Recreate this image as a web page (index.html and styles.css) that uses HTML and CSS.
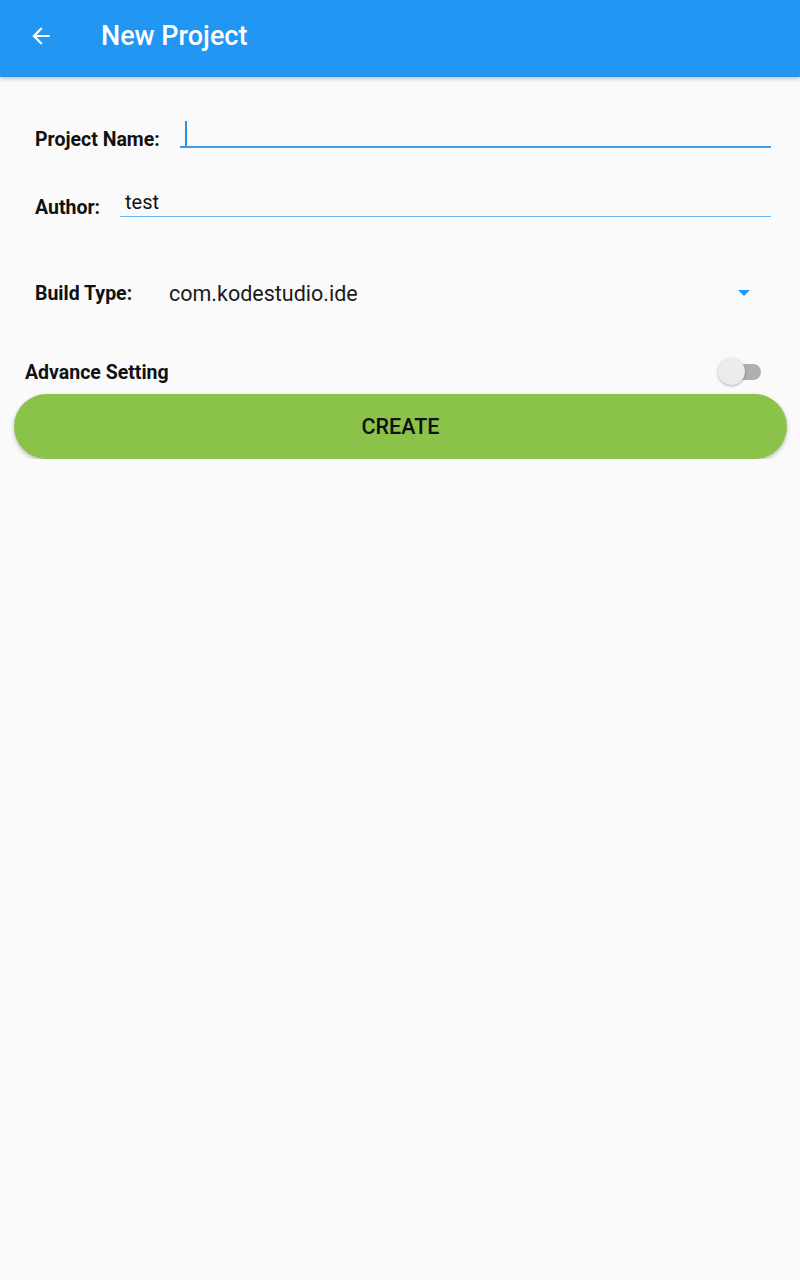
FILE: index.html
```html
<!DOCTYPE html>
<html>
<head>
<meta charset="utf-8">
<link rel="stylesheet" href="styles.css">
</head>
<body>
<header class="appbar">
  <svg class="back" viewBox="0 0 24 24" width="26" height="26"><path d="M20 11H7.83l5.59-5.59L12 4l-8 8 8 8 1.41-1.41L7.83 13H20v-2z" fill="#fff"/></svg>
  <h1 class="title">New Project</h1>
</header>
<main class="content">
  <div class="row row-name">
    <label class="label">Project Name:</label>
    <div class="input focused"><span class="cursor"></span></div>
  </div>
  <div class="row row-author">
    <label class="label">Author:</label>
    <div class="input"><span class="value">test</span></div>
  </div>
  <div class="row row-build">
    <label class="label">Build Type:</label>
    <div class="select">
      <span class="select-value">com.kodestudio.ide</span>
      <span class="caret"></span>
    </div>
  </div>
  <div class="row row-adv">
    <span class="label">Advance Setting</span>
    <span class="switch"><span class="track"></span><span class="thumb"></span></span>
  </div>
  <button class="create">CREATE</button>
</main>
</body>
</html>
```

FILE: styles.css
```css
html, body {
  margin: 0;
  padding: 0;
  background: #fafafa;
  font-family: Roboto, "Noto Sans", sans-serif;
  color: #212121;
}
.appbar {
  height: 77px;
  background: #2196f3;
  display: flex;
  align-items: center;
  padding-left: 28px;
  box-shadow: 0 2px 4px rgba(0,0,0,0.22);
  position: relative;
}
.back {
  margin-top: -6px;
}
.title {
  margin: -6px 0 0 47px;
  font-size: 27px;
  font-weight: 500;
  color: #fff;
}
.content {
  display: flex;
  flex-direction: column;
}
.row {
  display: flex;
  align-items: flex-end;
}
.label {
  font-size: 19.5px;
  font-weight: 700;
  color: #111;
  white-space: nowrap;
}
.row-name {
  margin-top: 31px;
  padding: 0 29px 0 35px;
  height: 40px;
}
.row-name .label {
  width: 145px;
  margin-bottom: -3px;
}
.input {
  flex: 1;
  position: relative;
  height: 38px;
  border-bottom: 1px solid #64b5f6;
  display: flex;
  align-items: flex-end;
}
.input.focused {
  border-bottom: 2px solid #3f9be8;
  height: 38px;
}
.cursor {
  position: absolute;
  left: 5px;
  bottom: 0;
  width: 2px;
  height: 25px;
  background: #2b8fe6;
}
.row-author {
  margin-top: 29px;
  padding: 0 29px 0 35px;
  height: 40px;
}
.row-author .label {
  width: 85px;
  margin-bottom: -2px;
}
.row-author .input {
  height: 39px;
}
.value {
  font-size: 20px;
  padding-left: 5px;
  padding-bottom: 2px;
  color: #111;
}
.row-build {
  margin-top: 56px;
  padding: 0 40px 0 35px;
  height: 40px;
  align-items: center;
}
.row-build .label {
  width: 134px;
}
.select {
  flex: 1;
  display: flex;
  align-items: center;
  justify-content: space-between;
}
.select-value {
  font-size: 21.5px;
  color: #1a1a1a;
}
.caret {
  width: 0;
  height: 0;
  border-left: 6px solid transparent;
  border-right: 6px solid transparent;
  border-top: 6px solid #2196f3;
  margin-right: 10px;
}
.row-adv {
  margin-top: 44px;
  padding: 0 39px 0 25px;
  height: 30px;
  align-items: center;
  justify-content: space-between;
}
.switch {
  position: relative;
  width: 43px;
  height: 28px;
  display: inline-block;
}
.track {
  position: absolute;
  left: 5px;
  right: 0;
  top: 6px;
  height: 16px;
  border-radius: 8px;
  background: #b0b0b0;
}
.thumb {
  position: absolute;
  left: 0;
  top: 0;
  width: 27px;
  height: 27px;
  border-radius: 50%;
  background: #ececec;
  box-shadow: 0 1px 3px rgba(0,0,0,0.3);
}
.create {
  margin: 7px 13px 0 14px;
  height: 65px;
  border: none;
  border-radius: 33px;
  background: #8bc34a;
  font-family: Roboto, sans-serif;
  font-size: 21.5px;
  font-weight: 500;
  color: #111;
  box-shadow: 0 2px 4px rgba(0,0,0,0.25);
}
```
